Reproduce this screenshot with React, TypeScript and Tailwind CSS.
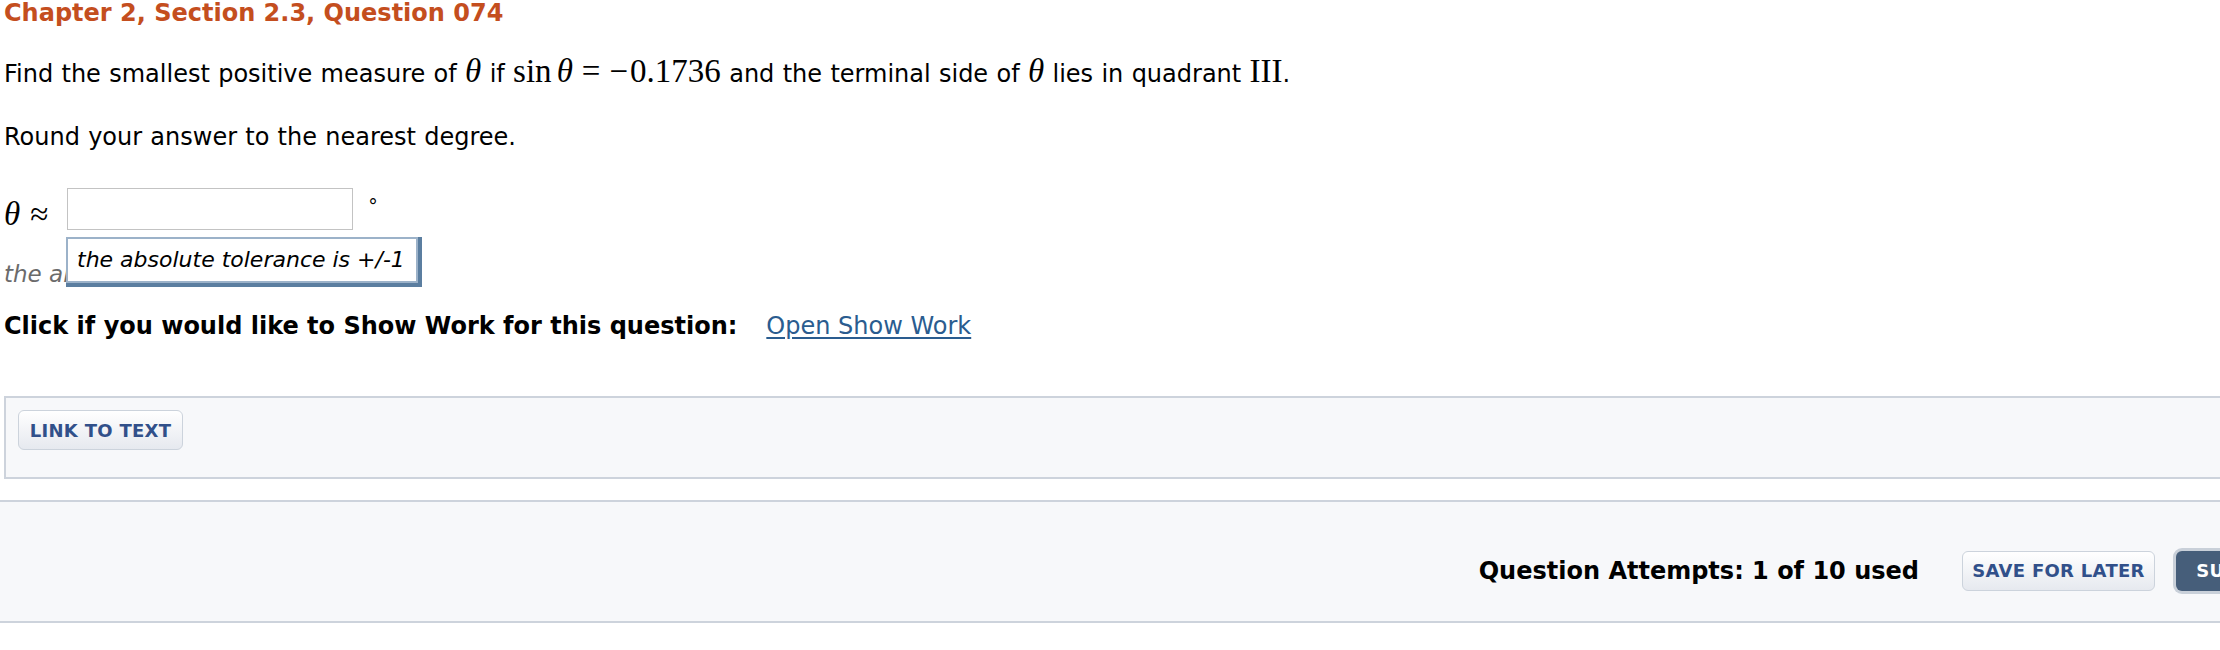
import React from 'react'

// math bits are set in a serif face, like the MathJax output in the screenshot
function M({ children, italic }: { children: React.ReactNode; italic?: boolean }) {
  return (
    <span className={`font-['Liberation_Serif',serif] text-[33px] leading-[20px] ${italic ? 'italic' : ''}`}>
      {children}
    </span>
  )
}

export default function App() {
  return (
    <div className="w-[2220px] h-[650px] overflow-hidden bg-white text-black font-['DejaVu_Sans',Verdana,sans-serif]">
      <div className="w-[2400px] pl-[4px]">
        {/* Title */}
        <h1 className="pt-[1px] text-[24px] leading-[24px] font-bold text-[#c44e1e]">
          Chapter 2, Section 2.3, Question 074
        </h1>

        {/* Question */}
        <p className="mt-[35px] text-[24px] leading-[28px] whitespace-nowrap [word-spacing:0.7px]">
          Find the smallest positive measure of <M italic>θ</M> if{' '}
          <M>
            sin<span className="ml-[5px] italic">θ</span>
            <span className="mx-[9px]">=</span>
            <span className="mr-[2px]">−</span>0.1736
          </M>{' '}
          and the terminal side of <M italic>θ</M> lies in quadrant <M>III</M>.
        </p>
        <p className="mt-[35px] text-[24px] leading-[28px] [word-spacing:0.6px]">
          Round your answer to the nearest degree.
        </p>

        {/* Answer row */}
        <div className="mt-[37px] flex items-start h-[42px]">
          <div className="mt-[10px] font-['Liberation_Serif',serif] text-[33px] leading-[32px] whitespace-nowrap">
            <span className="italic">θ</span>
            <span className="ml-[10px]">≈</span>
          </div>
          <input
            type="text"
            className="ml-[19px] w-[286px] h-[42px] border border-[#c3c3c3] bg-white outline-none"
          />
          <span className="ml-[15px] mt-[8px] text-[19px] leading-[20px]">°</span>
        </div>

        {/* Tolerance hint with tooltip on top */}
        <div className="relative mt-[30px] h-[28px]">
          <p className="text-[23px] leading-[28px] italic text-[#6b6b6b]">the absolute tolerance is +/-1</p>
          <div className="absolute -top-[23px] left-[62px] w-[356px] h-[50px] border-r-4 border-b-4 border-[#5b7ea0] bg-white">
            <div className="h-full border-2 border-[#9cb2c9] pl-[9px] pt-[7px] text-[22px] leading-[28px] italic text-black whitespace-nowrap">
              the absolute tolerance is +/-1
            </div>
          </div>
        </div>

        {/* Show work */}
        <p className="mt-[24px] text-[24px] leading-[28px] whitespace-nowrap">
          <span className="font-bold">Click if you would like to Show Work for this question:</span>
          <a href="#" className="ml-[29px] text-[#2a5c8f] underline underline-offset-[3px]">
            Open Show Work
          </a>
        </p>

        {/* Link to text panel */}
        <div className="mt-[56px] h-[83px] border-2 border-[#cdd3dc] bg-[#f7f8fa] pl-[12px] pt-[12px]">
          <button className="h-[40px] w-[165px] rounded-[6px] border border-[#ccd3dc] bg-gradient-to-b from-white to-[#e6e9ef] text-[18px] font-bold text-[#31508a] tracking-[0.3px]">
            LINK TO TEXT
          </button>
        </div>

        {/* Footer bar */}
        <div className="-ml-[4px] mt-[21px] h-[123px] border-y-2 border-[#cdd3dc] bg-[#f7f8fa] flex items-center justify-end pt-[18px] pr-[7px]">
          <span className="mr-[43px] text-[24px] leading-[28px] font-bold whitespace-nowrap">
            Question Attempts: 1 of 10 used
          </span>
          <button className="h-[40px] w-[193px] rounded-[6px] border border-[#ccd3dc] bg-gradient-to-b from-white to-[#e6e9ef] text-[18px] font-bold text-[#31508a] tracking-[0.3px] whitespace-nowrap">
            SAVE FOR LATER
          </button>
          <button className="ml-[21px] h-[40px] w-[217px] rounded-[6px] bg-[#465e7a] text-[18px] font-bold text-white tracking-[0.3px] whitespace-nowrap shadow-[0_0_0_3px_#c9d0d9]">
            SUBMIT ANSWER
          </button>
        </div>
      </div>
    </div>
  )
}
